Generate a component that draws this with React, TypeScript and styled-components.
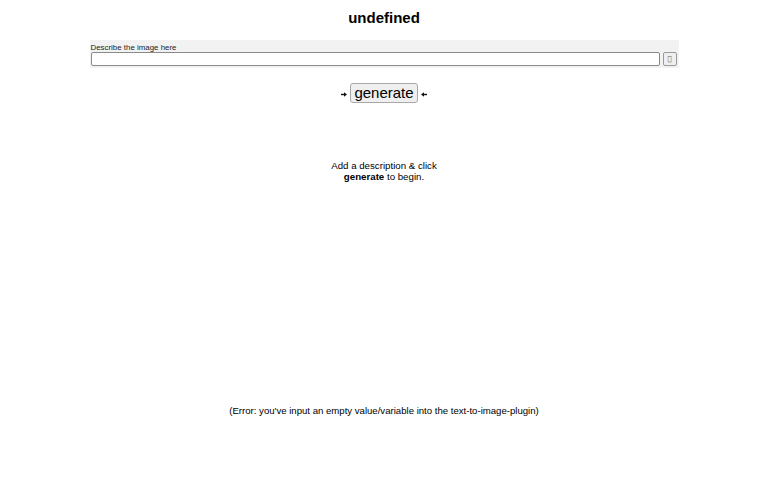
import React, { useState } from 'react';
import styled, { createGlobalStyle } from 'styled-components';

const GlobalStyle = createGlobalStyle`
  html, body {
    margin: 0;
    padding: 0;
    background: #ffffff;
    font-family: "Liberation Sans", Arial, sans-serif;
    color: #000;
  }
`;

const Page = styled.div`
  width: 768px;
  height: 480px;
  display: flex;
  flex-direction: column;
  align-items: center;
`;

const Title = styled.h1`
  margin: 9px 0 0 0;
  font-size: 15px;
  line-height: 18px;
  font-weight: bold;
`;

const PromptPanel = styled.div`
  margin-top: 13px;
  width: 589px;
  box-sizing: border-box;
  padding: 3px 1px 2px 1px;
  background: #f2f2f2;
  display: flex;
  flex-direction: column;
`;

const PromptLabel = styled.label`
  font-size: 7.9px;
  line-height: 9px;
  color: #222;
`;

const PromptRow = styled.div`
  display: flex;
  align-items: center;
  gap: 3px;
`;

const PromptInput = styled.input`
  width: 569px;
  height: 14px;
  box-sizing: border-box;
  border: 1px solid #8a8a8a;
  border-radius: 2px;
  background: #fff;
  padding: 0 2px;
  font-size: 9px;
  font-family: inherit;
`;

const IconButton = styled.button`
  width: 14px;
  height: 14px;
  box-sizing: border-box;
  padding: 0;
  border: 1px solid #9a9a9a;
  border-radius: 2px;
  background: #efefef;
  font-size: 7px;
  line-height: 12px;
  color: #666;
  font-family: "DejaVu Sans", sans-serif;
`;

const GenerateRow = styled.div`
  margin-top: 15px;
  display: flex;
  align-items: center;
  gap: 3px;
`;

const ArrowIcon = styled.svg`
  width: 6px;
  height: 5px;
  margin-top: 3px;
`;

const GenerateButton = styled.button`
  height: 20px;
  box-sizing: border-box;
  padding: 0 3px;
  border: 1px solid #a8a8a8;
  border-radius: 3px;
  background: #efefef;
  font-family: "Liberation Sans", Arial, sans-serif;
  font-size: 15px;
  line-height: 18px;
  color: #000;
`;

const Hint = styled.p`
  margin: 57px 0 0 0;
  font-size: 9.7px;
  line-height: 11px;
  text-align: center;
`;

const ErrorNote = styled.p`
  margin: 223px 0 0 0;
  font-size: 9.6px;
  line-height: 12px;
  text-align: center;
`;

const Arrow: React.FC<{ flip?: boolean }> = ({ flip }) => (
  <ArrowIcon viewBox="0 0 6 5" style={flip ? { transform: 'scaleX(-1)' } : undefined}>
    <rect x="0" y="1.8" width="3.5" height="1.4" fill="#111" />
    <polygon points="3,0.3 6,2.5 3,4.7" fill="#111" />
  </ArrowIcon>
);

const App: React.FC = () => {
  const [prompt, setPrompt] = useState('');

  return (
    <>
      <GlobalStyle />
      <Page>
        <Title>undefined</Title>

        <PromptPanel>
          <PromptLabel htmlFor="prompt">Describe the image here</PromptLabel>
          <PromptRow>
            <PromptInput
              id="prompt"
              value={prompt}
              onChange={e => setPrompt(e.target.value)}
            />
            <IconButton>&#xFFFF;</IconButton>
          </PromptRow>
        </PromptPanel>

        <GenerateRow>
          <Arrow />
          <GenerateButton>generate</GenerateButton>
          <Arrow flip />
        </GenerateRow>

        <Hint>
          Add a description &amp; click
          <br />
          <b>generate</b> to begin.
        </Hint>

        <ErrorNote>
          (Error: you've input an empty value/variable into the text-to-image-plugin)
        </ErrorNote>
      </Page>
    </>
  );
};

export default App;
